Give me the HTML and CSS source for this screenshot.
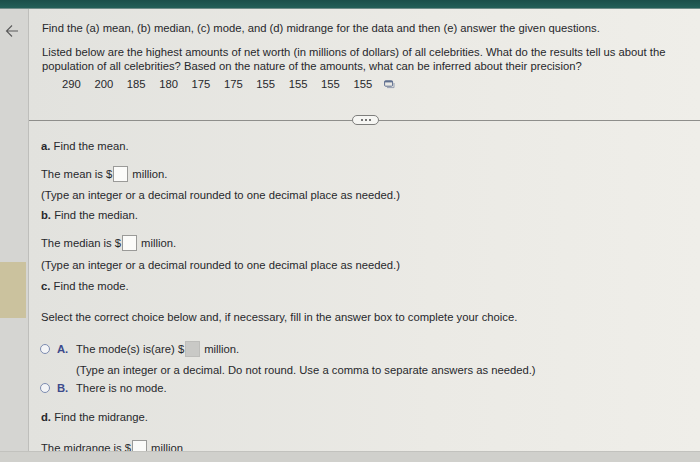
FILE: index.html
```html
<!DOCTYPE html>
<html>
<head>
<meta charset="utf-8">
<link rel="stylesheet" href="styles.css">
</head>
<body>
<div class="screen">
  <div class="topbar"></div>
  <div class="frame">
    <aside class="sidebar">
      <svg class="back" width="14" height="14" viewBox="0 0 14 14"><path d="M13 7H1.5M7 1.5L1.5 7L7 12.5" fill="none" stroke="#5a5a5a" stroke-width="1.1"/></svg>
      <div class="tan"></div>
    </aside>
    <main class="main">
      <section class="question">
        <p class="line title">Find the (a) mean, (b) median, (c) mode, and (d) midrange for the data and then (e) answer the given questions.</p>
        <p class="line para">Listed below are the highest amounts of net worth (in millions of dollars) of all celebrities. What do the results tell us about the population of all celebrities? Based on the nature of the amounts, what can be inferred about their precision?</p>
        <div class="numbers">
          <span>290</span><span>200</span><span>185</span><span>180</span><span>175</span><span>175</span><span>155</span><span>155</span><span>155</span><span>155</span>
          <svg class="dataicon" width="11" height="9" viewBox="0 0 11 9"><rect x="0.6" y="0.8" width="8" height="5.4" rx="1" fill="none" stroke="#5f6f8f" stroke-width="1"/><rect x="0.6" y="0.8" width="8" height="1.6" fill="#5f6f8f"/><path d="M3 7.6H10V3" fill="none" stroke="#8d97ad" stroke-width="0.9"/></svg>
        </div>
      </section>
      <div class="divider">
        <span class="rule"></span>
        <span class="pill"><i></i><i></i><i></i></span>
        <span class="rule"></span>
      </div>
      <section class="answers">
        <p class="line g-a"><b>a.</b> Find the mean.</p>
        <p class="row g-mean">The mean is $<span class="box"></span> million.</p>
        <p class="line g-s">(Type an integer or a decimal rounded to one decimal place as needed.)</p>
        <p class="line g-s"><b>b.</b> Find the median.</p>
        <p class="row g-mean">The median is $<span class="box"></span> million.</p>
        <p class="line g-t">(Type an integer or a decimal rounded to one decimal place as needed.)</p>
        <p class="line g-t"><b>c.</b> Find the mode.</p>
        <p class="line g-sel">Select the correct choice below and, if necessary, fill in the answer box to complete your choice.</p>
        <div class="choice g-sel">
          <span class="radio"></span><span class="letter">A.</span>
          <div class="choice-text">
            <p class="row">The mode(s) is(are) $<span class="box gray"></span> million.</p>
            <p class="line g-s">(Type an integer or a decimal. Do not round. Use a comma to separate answers as needed.)</p>
          </div>
        </div>
        <div class="choice g-b">
          <span class="radio"></span><span class="letter">B.</span>
          <div class="choice-text"><p class="line">There is no mode.</p></div>
        </div>
        <p class="line g-d"><b>d.</b> Find the midrange.</p>
        <p class="row g-mid">The midrange is $<span class="box"></span> million</p>
      </section>
    </main>
  </div>
  <div class="bottombar"></div>
</div>
</body>
</html>
```

FILE: styles.css
```css
* { box-sizing: border-box; }
html, body { margin: 0; padding: 0; }
body {
  width: 700px;
  height: 462px;
  overflow: hidden;
  font-family: "Liberation Sans", Arial, sans-serif;
  font-size: 11.25px;
  color: #27282c;
  background: #e6e6e2;
}
.screen {
  width: 700px;
  height: 462px;
  display: flex;
  flex-direction: column;
}
.topbar {
  height: 9px;
  flex: none;
  background: linear-gradient(to bottom, #1b4f4a, #235f58);
  border-bottom: 1px solid #6f8c88;
}
.frame {
  flex: 1;
  display: flex;
  min-height: 0;
  overflow: hidden;
}
.sidebar {
  width: 29px;
  flex: none;
  background: #d5d5d2;
  border-right: 1px solid #bebebb;
  display: flex;
  flex-direction: column;
  align-items: flex-start;
}
.back {
  margin: 15px 0 0 5px;
}
.tan {
  margin-top: 224px;
  width: 26px;
  height: 56px;
  background: #cbc29e;
}
.main {
  flex: 1;
  background: linear-gradient(to right, #e2e2de, #ebeae5 60%, #efeee9);
  display: flex;
  flex-direction: column;
  overflow: hidden;
}
p { margin: 0; }
.line { line-height: 14px; }
.row { line-height: 16px; display: flex; align-items: center; }
b { font-weight: bold; }
.question { padding-left: 13px; padding-right: 20px; }
.title { margin-top: 12px; }
.para { margin-top: 10px; }
.numbers {
  margin-top: 4px;
  padding-left: 20px;
  display: flex;
  align-items: center;
  gap: 13.6px;
  line-height: 14px;
}
.dataicon { margin-left: -2px; margin-top: 1px; }
.divider {
  margin-top: 24px;
  height: 10px;
  display: flex;
  align-items: center;
}
.rule {
  flex: 1;
  height: 1px;
  background: #8e8e8b;
}
.rule:first-child { flex: none; width: 323px; }
.pill {
  width: 27px;
  height: 10px;
  border: 1px solid #7e7e7c;
  border-radius: 5px;
  background: #f6f6f3;
  display: flex;
  align-items: center;
  justify-content: center;
  gap: 2px;
}
.pill i {
  width: 2px;
  height: 2px;
  border-radius: 50%;
  background: #4a4a4a;
}
.answers {
  padding-left: 12px;
  display: flex;
  flex-direction: column;
  align-items: flex-start;
}
.g-a { margin-top: 14px; }
.g-mean { margin-top: 13px; }
.g-s { margin-top: 6px; }
.g-t { margin-top: 7px; }
.g-sel { margin-top: 17px; }
.g-b { margin-top: 4px; }
.g-d { margin-top: 15px; }
.g-mid { margin-top: 16px; }
.box {
  display: inline-block;
  width: 15px;
  height: 16px;
  background: #fbfbf9;
  border: 1px solid #9a9a98;
  margin: 0 4px 0 1px;
}
.box.gray {
  background: #c9c9c6;
  border-color: #bdbdba;
}
.choice {
  display: flex;
  align-items: flex-start;
}
.radio {
  width: 10px;
  height: 10px;
  border-radius: 50%;
  border: 1px solid #7d8cb0;
  background: #f3f4f6;
  margin: 3px 0 0 -1px;
}
.letter {
  width: 19px;
  margin-left: 7px;
  line-height: 16px;
  color: #3c4a8c;
  font-weight: bold;
}
.choice-text {
  display: flex;
  flex-direction: column;
}
.g-b .radio { margin-top: 2px; }
.g-b .letter { line-height: 14px; }
.bottombar {
  height: 11px;
  flex: none;
  background: #d0d0cc;
  border-top: 1px solid #c2c2be;
}
```
